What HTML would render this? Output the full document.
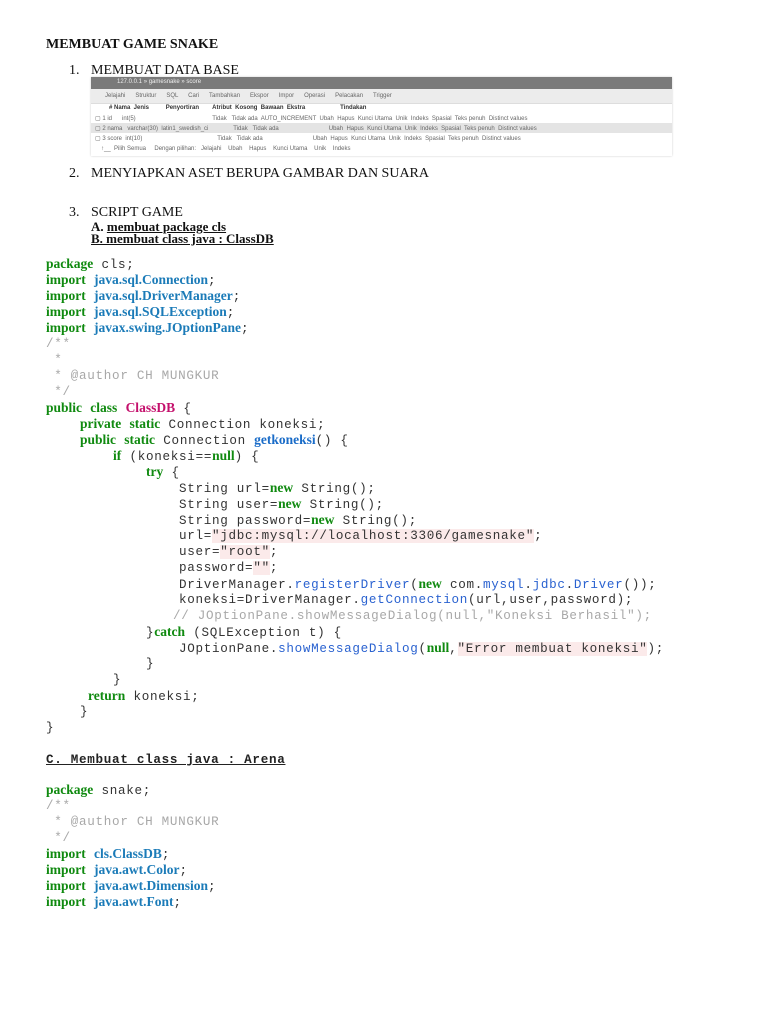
<!DOCTYPE html>
<html><head><meta charset="utf-8"><style>
body{margin:0;width:768px;height:1024px;background:#fff;position:relative;overflow:hidden;font-family:"Liberation Serif",serif;color:#111}
.l{position:absolute;white-space:pre;line-height:16px;height:16px;font-family:"Liberation Mono",monospace;font-size:12.6px;letter-spacing:0.7px;color:#333}
.k{font-family:"Liberation Serif",serif;font-weight:bold;color:#108a10;letter-spacing:0;font-size:13.5px}
.i{font-family:"Liberation Serif",serif;font-weight:bold;color:#1b7bb8;letter-spacing:0;font-size:13.5px}
.c{color:#a8a8a8}
.m{color:#2a62d0}
.s{background:#fbeaea}
.h{position:absolute;font-size:14px;line-height:16px;white-space:pre}
.tb{position:absolute;font-family:"Liberation Sans",sans-serif;font-size:6px;color:#666;white-space:pre}
</style></head><body>
<div class="h" style="left:46px;top:37px;font-weight:bold">MEMBUAT GAME SNAKE</div>
<div class="h" style="left:69px;top:63px">1.</div><div class="h" style="left:91px;top:63px">MEMBUAT DATA BASE</div>

<div style="position:absolute;left:91px;top:77px;width:581px;height:79px;background:#fff;box-shadow:0 0 2px #ccc">
 <div style="height:12px;background:#7a7a7a"></div>
 <div class="tb" style="left:26px;top:2px;color:#eee">127.0.0.1 » gamesnake » score</div>
 <div style="position:absolute;top:12px;left:0;right:0;height:14px;background:#ececec;border-bottom:1px solid #ddd"></div>
 <div class="tb" style="left:14px;top:16px">Jelajahi      Struktur      SQL      Cari      Tambahkan      Ekspor      Impor      Operasi      Pelacakan      Trigger</div>
 <div class="tb" style="left:18px;top:28px;color:#333;font-weight:bold"># Nama  Jenis          Penyortiran        Atribut  Kosong  Bawaan  Ekstra                     Tindakan</div>
 <div style="position:absolute;top:46px;left:0;right:0;height:10px;background:#e4e4e4"></div>
 <div class="tb" style="left:4px;top:38px">▢ 1 id      int(5)                                              Tidak   Tidak ada  AUTO_INCREMENT  Ubah  Hapus  Kunci Utama  Unik  Indeks  Spasial  Teks penuh  Distinct values</div>
 <div class="tb" style="left:4px;top:48px">▢ 2 nama   varchar(30)  latin1_swedish_ci               Tidak   Tidak ada                              Ubah  Hapus  Kunci Utama  Unik  Indeks  Spasial  Teks penuh  Distinct values</div>
 <div class="tb" style="left:4px;top:58px">▢ 3 score  int(10)                                             Tidak   Tidak ada                              Ubah  Hapus  Kunci Utama  Unik  Indeks  Spasial  Teks penuh  Distinct values</div>
 <div class="tb" style="left:10px;top:69px">↑__  Pilih Semua     Dengan pilihan:   Jelajahi    Ubah    Hapus    Kunci Utama    Unik    Indeks</div>
</div>

<div class="h" style="left:69px;top:166px">2.</div><div class="h" style="left:91px;top:166px">MENYIAPKAN ASET BERUPA GAMBAR DAN SUARA</div>
<div class="h" style="left:69px;top:205px">3.</div><div class="h" style="left:91px;top:205px">SCRIPT GAME</div>
<div class="h" style="left:91px;top:219px;font-weight:bold;font-size:13px">A. <u>membuat package cls</u></div>
<div class="h" style="left:91px;top:231px;font-weight:bold;font-size:13px"><u>B. membuat class java : ClassDB</u></div>

<div class="l" style="left:46px;top:256px"><span class="k">package</span> cls;</div>
<div class="l" style="left:46px;top:272px"><span class="k">import</span> <span class="i">java.sql.Connection</span>;</div>
<div class="l" style="left:46px;top:288px"><span class="k">import</span> <span class="i">java.sql.DriverManager</span>;</div>
<div class="l" style="left:46px;top:304px"><span class="k">import</span> <span class="i">java.sql.SQLException</span>;</div>
<div class="l" style="left:46px;top:320px"><span class="k">import</span> <span class="i">javax.swing.JOptionPane</span>;</div>
<div class="l c" style="left:46px;top:336px">/**</div>
<div class="l c" style="left:46px;top:352px"> *</div>
<div class="l c" style="left:46px;top:368px"> * @author CH MUNGKUR</div>
<div class="l c" style="left:46px;top:384px"> */</div>
<div class="l" style="left:46px;top:400px"><span class="k">public</span> <span class="k">class</span> <span class="k" style="color:#c4106c">ClassDB</span> {</div>
<div class="l" style="left:80px;top:416px"><span class="k">private</span> <span class="k">static</span> Connection koneksi;</div>
<div class="l" style="left:80px;top:432px"><span class="k">public</span> <span class="k">static</span> Connection <span class="k" style="color:#1a6cc8">getkoneksi</span>() {</div>
<div class="l" style="left:113px;top:448px"><span class="k">if</span> (koneksi==<span class="k">null</span>) {</div>
<div class="l" style="left:146px;top:464px"><span class="k">try</span> {</div>
<div class="l" style="left:179px;top:480px">String url=<span class="k">new</span> String();</div>
<div class="l" style="left:179px;top:496px">String user=<span class="k">new</span> String();</div>
<div class="l" style="left:179px;top:512px">String password=<span class="k">new</span> String();</div>
<div class="l" style="left:179px;top:528px">url=<span class="s">"jdbc:mysql://localhost:3306/gamesnake"</span>;</div>
<div class="l" style="left:179px;top:544px">user=<span class="s">"root"</span>;</div>
<div class="l" style="left:179px;top:560px">password=<span class="s">""</span>;</div>
<div class="l" style="left:179px;top:576px">DriverManager.<span class="m">registerDriver</span>(<span class="k">new</span> com.<span class="m">mysql</span>.<span class="m">jdbc</span>.<span class="m">Driver</span>());</div>
<div class="l" style="left:179px;top:592px">koneksi=DriverManager.<span class="m">getConnection</span>(url,user,password);</div>
<div class="l c" style="left:173px;top:608px">// JOptionPane.showMessageDialog(null,"Koneksi Berhasil");</div>
<div class="l" style="left:146px;top:624px">}<span class="k">catch</span> (SQLException t) {</div>
<div class="l" style="left:179px;top:640px">JOptionPane.<span class="m">showMessageDialog</span>(<span class="k">null</span>,<span class="s">"Error membuat koneksi"</span>);</div>
<div class="l" style="left:146px;top:656px">}</div>
<div class="l" style="left:113px;top:672px">}</div>
<div class="l" style="left:88px;top:688px"><span class="k">return</span> koneksi;</div>
<div class="l" style="left:80px;top:704px">}</div>
<div class="l" style="left:46px;top:720px">}</div>

<div class="l" style="left:46px;top:752px;font-weight:bold;color:#222;text-decoration:underline">C. Membuat class java : Arena</div>
<div class="l" style="left:46px;top:782px"><span class="k">package</span> snake;</div>
<div class="l c" style="left:46px;top:798px">/**</div>
<div class="l c" style="left:46px;top:814px"> * @author CH MUNGKUR</div>
<div class="l c" style="left:46px;top:830px"> */</div>
<div class="l" style="left:46px;top:846px"><span class="k">import</span> <span class="i">cls.ClassDB</span>;</div>
<div class="l" style="left:46px;top:862px"><span class="k">import</span> <span class="i">java.awt.Color</span>;</div>
<div class="l" style="left:46px;top:878px"><span class="k">import</span> <span class="i">java.awt.Dimension</span>;</div>
<div class="l" style="left:46px;top:894px"><span class="k">import</span> <span class="i">java.awt.Font</span>;</div>
</body></html>
